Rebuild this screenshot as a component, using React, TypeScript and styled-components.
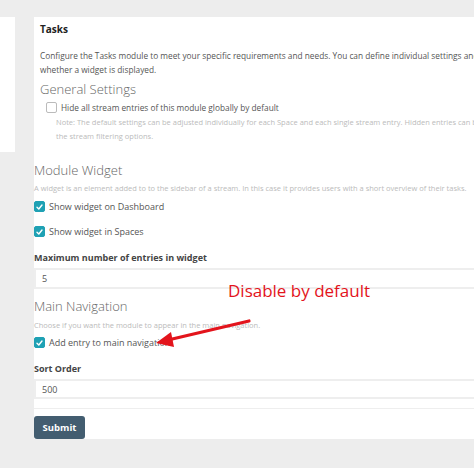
import React from 'react';
import styled, { createGlobalStyle } from 'styled-components';

const GlobalStyle = createGlobalStyle`
	html, body {
		margin: 0;
		padding: 0;
		background: #ededed;
		overflow: hidden;
	}
	body {
		font-family: 'Open Sans', 'Liberation Sans', sans-serif;
		color: #555;
	}
`;

const Page = styled.div`
	position: relative;
	display: flex;
	align-items: flex-start;
	gap: 19px;
	padding-top: 17px;
	height: 468px;
	box-sizing: border-box;
`;

const SideCard = styled.div`
	flex: 0 0 15px;
	height: 135px;
	background: #fff;
`;

const MainCard = styled.div`
	flex: 0 0 560px;
	height: 422px;
	background: #fff;
	display: flex;
	flex-direction: column;
`;

const Intro = styled.div`
	padding: 0 6px;
`;

const CardTitle = styled.div`
	margin-top: 5px;
	font-size: 10px;
	line-height: 14px;
	font-weight: 700;
	color: #222;
`;

const Description = styled.div`
	margin-top: 13px;
	font-size: 8.3px;
	line-height: 14px;
	white-space: nowrap;
`;

const SectionTitle = styled.div<{ $top: number }>`
	margin-top: ${p => p.$top}px;
	font-size: 13px;
	line-height: 18px;
	font-weight: 300;
	color: #666;
	white-space: nowrap;
`;

const Hint = styled.div<{ $top?: number }>`
	margin-top: ${p => p.$top ?? 0}px;
	font-size: 7.5px;
	line-height: 12px;
	color: #bbb;
	white-space: nowrap;
`;

const NoteHint = styled(Hint)`
	padding-left: 16px;
	line-height: 14px;
`;

const CheckRow = styled.label<{ $top: number; $indent?: number; $size?: number }>`
	margin-top: ${p => p.$top}px;
	padding-left: ${p => p.$indent ?? 0}px;
	display: flex;
	align-items: center;
	gap: 4px;
	height: 16px;
	font-size: ${p => p.$size ?? 9}px;
	color: #555;
	white-space: nowrap;
`;

const Box = styled.span<{ $checked: boolean }>`
	flex: 0 0 auto;
	width: 11px;
	height: 11px;
	box-sizing: border-box;
	border-radius: 2px;
	display: flex;
	align-items: center;
	justify-content: center;
	background: ${p => (p.$checked ? '#1fa1b4' : '#fff')};
	border: 1px solid ${p => (p.$checked ? '#1fa1b4' : '#bbb')};
`;

const FieldLabel = styled.div<{ $top: number }>`
	margin-top: ${p => p.$top}px;
	font-size: 9px;
	line-height: 14px;
	font-weight: 700;
	color: #444;
`;

const TextInput = styled.div`
	margin-top: 3px;
	height: 21px;
	box-sizing: border-box;
	border: 2px solid #eee;
	padding-left: 6px;
	display: flex;
	align-items: center;
	font-size: 9px;
	color: #555;
`;

const Divider = styled.div`
	margin-top: 9px;
	height: 1px;
	background: #eee;
`;

const SubmitButton = styled.button`
	margin-top: 7px;
	align-self: flex-start;
	width: 51px;
	height: 23px;
	border: none;
	border-radius: 3px;
	background: #435d70;
	color: #fff;
	font-family: inherit;
	font-size: 9.5px;
	font-weight: 700;
	padding: 0;
`;

const Callout = styled.div`
	position: absolute;
	left: 228px;
	top: 281px;
	font-size: 17px;
	line-height: 20px;
	color: #e3141c;
	white-space: nowrap;
`;

const CalloutArrow = styled.svg`
	position: absolute;
	left: 150px;
	top: 312px;
`;

const Check = ({ checked }: { checked: boolean }) => (
	<Box $checked={checked}>
		{checked && (
			<svg width='7' height='6' viewBox='0 0 7 6'>
				<path d='M1 3.2 L2.8 5 L6 1' fill='none' stroke='#fff' strokeWidth='1.4' strokeLinecap='round' strokeLinejoin='round' />
			</svg>
		)}
	</Box>
);

export default function App() {
	return (
		<>
			<GlobalStyle />
			<Page>
				<SideCard />
				<MainCard>
					<Intro>
						<CardTitle>Tasks</CardTitle>
						<Description>
							Configure the Tasks module to meet your specific requirements and needs. You can define individual settings and
							<br />
							whether a widget is displayed.
						</Description>
						<SectionTitle $top={3}>General Settings</SectionTitle>
						<CheckRow $top={1} $indent={6} $size={8.3}>
							<Check checked={false} />
							Hide all stream entries of this module globally by default
						</CheckRow>
						<NoteHint>
							Note: The default settings can be adjusted individually for each Space and each single stream entry. Hidden entries can be displayed using
							<br />
							the stream filtering options.
						</NoteHint>
					</Intro>

					<SectionTitle $top={18}>Module Widget</SectionTitle>
					<Hint $top={3}>
						A widget is an element added to to the sidebar of a stream. In this case it provides users with a short overview of their tasks.
					</Hint>
					<CheckRow $top={5}>
						<Check checked />
						Show widget on Dashboard
					</CheckRow>
					<CheckRow $top={9}>
						<Check checked />
						Show widget in Spaces
					</CheckRow>
					<FieldLabel $top={12}>Maximum number of entries in widget</FieldLabel>
					<TextInput>5</TextInput>

					<SectionTitle $top={8}>Main Navigation</SectionTitle>
					<Hint $top={4}>Choose if you want the module to appear in the main navigation.</Hint>
					<CheckRow $top={4}>
						<Check checked />
						Add entry to main navigation
					</CheckRow>
					<FieldLabel $top={11}>Sort Order</FieldLabel>
					<TextInput>500</TextInput>
					<Divider />
					<SubmitButton>Submit</SubmitButton>
				</MainCard>

				<Callout>Disable by default</Callout>
				<CalloutArrow width='110' height='40' viewBox='0 0 110 40'>
					<line x1='99' y1='9' x2='18' y2='28' stroke='#e3141c' strokeWidth='3.2' strokeLinecap='round' />
					<polygon points='6,31 21,20 24,35' fill='#e3141c' />
				</CalloutArrow>
			</Page>
		</>
	);
}
